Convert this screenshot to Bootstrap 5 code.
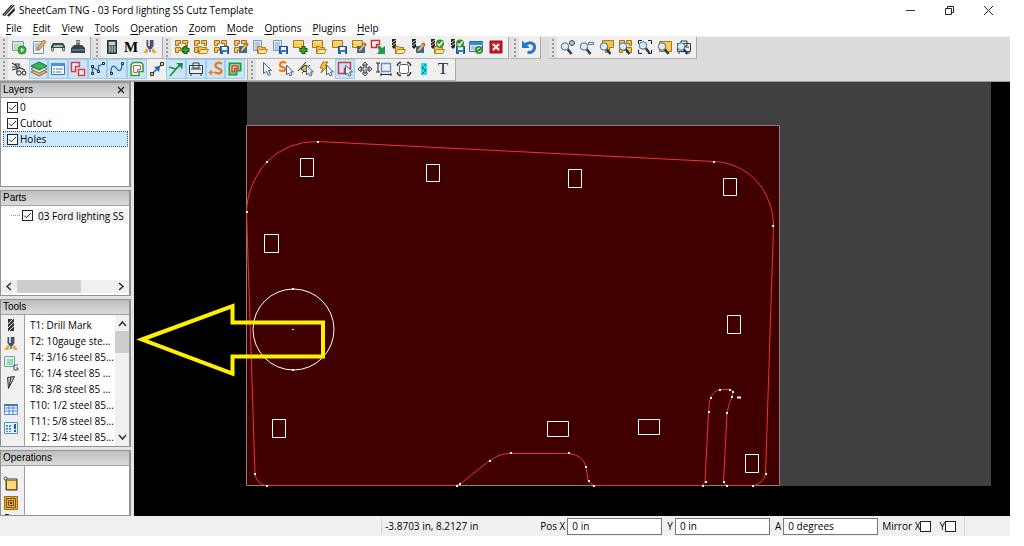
<!DOCTYPE html>
<html lang="en">
<head>
<meta charset="utf-8">
<meta name="viewport" content="width=device-width, initial-scale=1">
<title>SheetCam TNG - 03 Ford lighting SS Cutz Template</title>
<link rel="stylesheet" href="https://cdn.jsdelivr.net/npm/bootstrap@5.3.0/dist/css/bootstrap.min.css">
<style>
body{font-family:"Open Sans","Noto Sans",sans-serif;font-size:10px;line-height:16px;color:#000;background:#fff}
.app-window{height:100vh;padding:0 14px 10px 0}
button{border:0;padding:0;background:none;color:inherit}
.title-bar{height:20px;padding-left:2px}
.win-btn{width:39px;height:18px}
.win-btns{padding-right:2px}
.menu-line{height:16px;padding-left:6px}
.menu-line{gap:11px}
.menu-line a{color:#000;text-decoration:none}
.menu-line u{text-underline-offset:2px}
.tool-area{background:#dcdcdc;border-top:1px solid #f0f0f0;height:46px;border-bottom:1px solid #999}
.tool-group{height:22px;background:#f0f0f0;border-right:1px solid #aaa;border-bottom:1px solid #b4b4b4;padding-right:2px}
.grip{width:8px;margin-right:1px;background:radial-gradient(circle,#999 1px,transparent 1px) 0 1px/8px 4px,#e2e2e2}
.tool-btn{flex:1 1 0;min-width:0;height:20px}
.tool-btn.active{background:#cce4f7;outline:1px solid #99cdf5;outline-offset:-1px}
.tool-btn svg,.side-btn svg{width:16px;height:16px;display:block;margin:auto;overflow:visible}
.side-bar{width:134px;background:#e4e4e4;padding-right:3px;gap:3px}
.dock{border:1px solid #8f9296;border-right-width:2px;background:#fff;overflow:hidden}
.dock-h{height:15px;line-height:14px;padding:0 4px 0 2px;background:linear-gradient(#bfbfbf,#dadada);border-bottom:1px solid #a0a0a0;font-family:"Liberation Sans",Arial,sans-serif;font-size:10px;flex:none;margin:0;font-weight:400}
.dock-layers{height:105px}.dock-parts{height:106px;padding-bottom:2px}.dock-tools{height:148px}
.tick{appearance:none;width:11px;height:11px;border:1px solid #222;background:#fff;margin:0;flex:none}
.tick:checked{background:#fff url("data:image/svg+xml,%3Csvg xmlns='http://www.w3.org/2000/svg' viewBox='0 0 9 9'%3E%3Cpath d='M1 4.5l2.3 2.3L8 2' fill='none' stroke='%23222'/%3E%3C/svg%3E")}
.layer-list{padding:1px 1px 0 2px}
.layer-row{height:16px;padding-left:3px;gap:2px;border:1px solid transparent;line-height:14px}
.layer-row.chosen{background:#cce8ff;border:1px dotted #357}
.part-row{padding:1px 1px 0 10px;height:18px}
.part-name{background:#f2f2f2;margin-left:4px;padding-left:1px;line-height:14px}
.bar-h{height:13px;background:#f0f0f0}
.bar-h svg{display:block}
.thumb{background:#cdcdcd}
.icon-col{width:24px;background:#f0f0f0;border-right:1px solid #a0a0a0;padding-left:1px;flex:none}
.side-btn{width:18px;height:19px;display:block}
.tool-list{padding-top:2px}
.tool-list li{height:16px;padding-left:5px;white-space:nowrap}
.bar-v{width:14px;background:#f0f0f0}
.status-bar{height:20px;background:#f0f0f0}
.status-box{width:95px;height:17px;border:1px solid #777;background:#fff;padding:0 4px;font-size:10px;color:#000;border-radius:0}
.box-label{margin-right:2px;margin-left:5px}
.status-cell{border-left:1px solid #d4d4d4}
.drawing{background:#000}
.cut{fill:none;stroke:#f03232}
.hole{fill:none;stroke:#fff}
</style>
</head>
<body>
<svg width="0" height="0" class="position-absolute" aria-hidden="true">
<defs>
<symbol id="parts" viewBox="0 0 16 16"><g fill="#f6c955" stroke="#a86d12"><path d="M1.500 1.500h5v3h-2v2h-3zM8.500 1.500h5v5h-2v-2h-3zM1.500 8.500h5v3h-2v2h-3z"/><path d="M8.500 8.500h5v5h-5z"/></g></symbol>
<symbol id="part" viewBox="0 0 16 16"><path d="M1.500 1.500h10v9h-4v-2h-6z" fill="#f8ce5c" stroke="#a87718"/><path d="M3 3h7" stroke="#ffe9a0"/></symbol>
<symbol id="sheet" viewBox="0 0 16 16"><path d="M1.500 1.500h8v10h-8z" fill="#dcebfa" stroke="#8298b2"/><path d="M3 4h5M3 6h5M3 8h5M3 10h5" stroke="#6f93bf" stroke-width=".8"/></symbol>
<symbol id="drill" viewBox="0 0 16 16"><path d="M2 0h4v8l-2 2-2-2z" fill="#222"/><path d="M2 4l4-3M2 7l4-3" stroke="#ccc"/></symbol>
<symbol id="b-plus" viewBox="0 0 16 16"><path d="M11.500 7v8M7.500 11h8" stroke="#165d10" stroke-width="4"/><path d="M11.500 8v6M8.500 11h6" stroke="#36a62a" stroke-width="2"/></symbol>
<symbol id="b-folder" viewBox="0 0 16 16"><path d="M5.500 14.500v-7h3l1 1h4v2" fill="#f4c25a" stroke="#aa7823"/><path d="M5.500 14.500l2-4h8l-2 4z" fill="#ffe79b" stroke="#b1812a"/></symbol>
<symbol id="b-disk" viewBox="0 0 16 16"><path d="M7.500 7.500h8v7h-8z" fill="#2779d3" stroke="#1a4a91"/><path d="M9 8h5v3H9zM10 13h4v2h-4z" fill="#fff"/></symbol>
<symbol id="b-pencil" viewBox="0 0 16 16"><path d="M6 7h8v7H6z" fill="#2c6bb6"/><path d="M7 13l1-3 5-6 2 2-5 6z" fill="#f7b858" stroke="#553" stroke-width=".8"/><path d="M13 4l2 2" stroke="#d35d2a" stroke-width="2"/></symbol>
<symbol id="b-check" viewBox="0 0 16 16"><circle cx="11" cy="4.500" r="4" fill="#31932b"/><path d="M8.500 4.500l2 2 3-4" fill="none" stroke="#fff" stroke-width="1.500"/></symbol>
<symbol id="b-cursor" viewBox="0 0 16 16"><path d="M8.500 4v10l2-2 1.500 3 2-1-1.500-3h3z" fill="#e6f1fc" stroke="#4b6380"/></symbol>
<symbol id="b-lens" viewBox="0 0 16 16"><path d="M7.500 10l4 5" stroke="#333b49" stroke-width="2.500"/><circle cx="5" cy="7.500" r="3.700" fill="#d8eefb" stroke="#52677c"/></symbol>
<symbol id="run" viewBox="0 0 16 16"><path d="M1.500 2.500h11v9h-11z" fill="#d3e2ef" stroke="#829bb4"/><path d="M3 5h8v5H3z" fill="#b9dfb3"/><circle cx="11" cy="11" r="4" fill="#35b344" stroke="#168526"/><path d="M10 9v4l3-2z" fill="#fff"/></symbol>
<symbol id="edit" viewBox="0 0 16 16"><path d="M2.500 2.500h10v12h-10z" fill="#eef5fc" stroke="#7894b5"/><path d="M4 5h7M4 7h7M4 9h6M4 11h5" stroke="#6c98ca"/><path d="M6 11l1-3 6-7 2 2-6 7z" fill="#f2ae52" stroke="#a7652c" stroke-width=".8"/></symbol>
<symbol id="table-m" viewBox="0 0 16 16"><path d="M3 4h10l2 3v2H1V7z" fill="#3f474c"/><path d="M4 6h8l1 2H3z" fill="#8ccdbb"/><path d="M1.500 9v3h2V9M12.500 9v3h2V9" fill="#bbb" stroke="#777"/></symbol>
<symbol id="printer" viewBox="0 0 16 16"><path d="M6 1h4v6H6z" fill="#68737e"/><path d="M6 3h4" stroke="#ddd"/><path d="M1 9l3-3h8l3 3v5H1z" fill="#354252"/><path d="M2 11h12" stroke="#929ca6"/></symbol>
<symbol id="calc" viewBox="0 0 16 16"><path d="M3.500 1.500h9v13h-9z" fill="#4e5d61" stroke="#222e32"/><path d="M5 3h6v3H5z" fill="#b4dfcf"/><path d="M5 8h1.500M7.500 8H9M10 8h1.500M5 10h1.500M7.500 10H9M10 10h1.500M5 12h1.500M7.500 12H9M10 12h1.500" stroke="#eee" stroke-width="1.200"/></symbol>
<symbol id="torch" viewBox="0 0 16 16"><path d="M4.500 1h7v6l-2 3h-3l-2-3z" fill="#465262"/><path d="M7 1v6" stroke="#c2d0dc" stroke-width="2"/><path d="M8 10v3" stroke="#38a3e6" stroke-width="2"/><path d="M1 14l4-5 1.500 2.500L5 14zM15 14l-4-5-1.500 2.500L11 14z" fill="#f5a61f"/></symbol>
<symbol id="nest" viewBox="0 0 16 16"><path d="M1.500 1.500h8v4h-3v3h-5z" fill="#fff" stroke="#df2733" stroke-width="1.500"/><path d="M7 7h3l2 2 3-2v8H7l2-3z" fill="#25984b"/></symbol>
<symbol id="refresh" viewBox="0 0 16 16"><path d="M1.500 2.500h13v10h-13z" fill="#e3eef9" stroke="#2c67a5"/><path d="M1 3h14v3H1z" fill="#3b88d7"/><path d="M3 8h5M3 10h4" stroke="#7894b5"/><circle cx="11" cy="11" r="4" fill="#2b8f35"/><path d="M9 11q0-2 3-2M13 11q0 2-3 2" stroke="#d2ffd0" fill="none"/></symbol>
<symbol id="stop" viewBox="0 0 16 16"><path d="M2 2h12v12H2z" fill="#cc1b28" stroke="#8d1119"/><path d="M5 5l6 6M11 5l-6 6" stroke="#fff" stroke-width="2"/></symbol>
<symbol id="undo" viewBox="0 0 16 16"><path d="M4 6C9 2 14 4 13.500 9c-.500 4-4 5-7 4" fill="none" stroke="#2474d0" stroke-width="3"/><path d="M1 1.500V9h8z" fill="#2379d7"/></symbol>
<symbol id="rapid" viewBox="0 0 16 16"><path d="M1 2l5 3v7M1 9l8-2 5 2M4 3h4v4M1 6h5" fill="none" stroke="#29323c" stroke-width="1.200"/><circle cx="8" cy="12" r="2.200" fill="#eee" stroke="#222"/><circle cx="13" cy="12" r="2" fill="#eee" stroke="#222"/></symbol>
<symbol id="layers" viewBox="0 0 16 16"><path d="M0 11l8-4 8 4-8 4z" fill="#f3b355" stroke="#9d641b"/><path d="M0 8l8-4 8 4-8 4z" fill="#e9eff4" stroke="#647484"/><path d="M0 5l8-4 8 4-8 4z" fill="#39b65a" stroke="#136c33"/></symbol>
<symbol id="props" viewBox="0 0 16 16"><path d="M1.500 2.500h13v11h-13z" fill="#f5fafe" stroke="#4276b0"/><path d="M1 3.500h14" stroke="#4d91d8" stroke-width="3"/><path d="M3 8h2M6 8h7M3 11h2M6 11h5" stroke="#4878a7"/></symbol>
<symbol id="redparts" viewBox="0 0 16 16"><path d="M1.500 1.500h8v4h-4v5h-4zM8.500 8.500h6v6h-6z" fill="#eef3fa" stroke="#d83b48" stroke-width="1.500"/></symbol>
<symbol id="nodes" viewBox="0 0 16 16"><path d="M2.500 12V6l6 4V5l5-2" fill="none" stroke="#246bb1" stroke-width="1.300"/><path d="M1.500 11.500h2v2h-2zM1.500 4.500h2v2h-2zM7.500 9.500h2v2h-2zM12.500 1.500h2v2h-2z" fill="#fff" stroke="#222"/></symbol>
<symbol id="curve" viewBox="0 0 16 16"><path d="M2 12C2 2 6 5 8 8s5 2 5-5" fill="none" stroke="#1966ba" stroke-width="1.300"/><path d="M1.500 11.500h2v2h-2zM12.500 1.500h2v2h-2z" fill="#fff" stroke="#222"/></symbol>
<symbol id="greenpart" viewBox="0 0 16 16"><path d="M4 1.500h8l2 2v7h-4v4H2V4z" fill="#fff" stroke="#259d3e" stroke-width="1.500"/><path d="M4.500 4.500h7v4h-3v3h-4z" fill="none" stroke="#d64f48"/></symbol>
<symbol id="startpt" viewBox="0 0 16 16"><path d="M3 13l9-9" stroke="#1c69b5" stroke-width="1.500"/><path d="M1.500 11.500h3v3h-3zM11.500 1.500h3v3h-3z" fill="#f6c34d" stroke="#333"/><path d="M5 6l6-1-1 6z" fill="#1c69b5"/></symbol>
<symbol id="arrow-d" viewBox="0 0 16 16"><path d="M1 6l7 2 4-4M2 15l6-7" fill="none" stroke="#22984b" stroke-width="1.800"/><path d="M8 2h7l-1 7-2-4z" fill="#178b42"/></symbol>
<symbol id="machine" viewBox="0 0 16 16"><path d="M1.500 4.500h13v8h-13zM3 8h10M5 2h6v5H5zM3 13v2M13 13v2" fill="#e9eff4" stroke="#303c48"/></symbol>
<symbol id="plus-s" viewBox="0 0 16 16"><path d="M3 9v5M.5 11.500h5" stroke="#ef7918" stroke-width="1.500"/><path d="M14 3C11 .5 7 2 7.500 5s6 2 6 5-5 3-7 1" stroke="#ef7918" fill="none" stroke-width="2.300"/></symbol>
<symbol id="outline" viewBox="0 0 16 16"><path d="M2.500 2.500h11v7h-4v4h-7z" fill="#fff" stroke="#0da832" stroke-width="2"/><path d="M5 5h6v2.500H7.500V11H5z" fill="#fff" stroke="#e22b24" stroke-width="1.500"/></symbol>
<symbol id="cursor" viewBox="0 0 16 16"><path d="M4.500 1.500v11l3-2 2 4 2-1-2-4h3z" fill="#e3f0fc" stroke="#4b6685"/></symbol>
<symbol id="move" viewBox="0 0 16 16"><path d="M8 3v10M3 8h10" stroke="#333" stroke-width="3"/><path d="M8 3v10M3 8h10" stroke="#fff"/><path d="M5.500 4L8 1l2.500 3zM5.500 12L8 15l2.500-3zM4 5.500L1 8l3 2.500zM12 5.500L15 8l-3 2.500z" fill="#fff" stroke="#333"/></symbol>
<symbol id="measure" viewBox="0 0 16 16"><path d="M5.500 2.500h9v8h-9z" fill="#e6effa" stroke="#7093bd" stroke-width="1.500"/><path d="M2 2v9M0 2h4M0 11h4M5 13.500h10M5 12v3M15 12v3" stroke="#223"/></symbol>
<symbol id="corners" viewBox="0 0 16 16"><path d="M1.500 5V3.500l2-2H5M11 1.500h1.500l2 2V5M1.500 11v1.500l2 2H5M14.500 11v1.500l-2 2H11" fill="none" stroke="#333" stroke-width="1.500"/><rect x="3.500" y="3.500" width="9" height="9" rx="2" fill="#fff" stroke="#555"/></symbol>
<symbol id="zigzag" viewBox="0 0 16 16"><path d="M5 2h6v12H5z" fill="#16e6ec"/><path d="M10 3L6 7l4 2-4 4" stroke="#184d6b" fill="none"/></symbol>
<symbol id="gsheet" viewBox="0 0 16 16"><path d="M1.500 1.500h10v10h-10z" fill="#d9eff4" stroke="#6e9dbb"/><path d="M4 4h6v6H4z" fill="#91e199"/><path d="M15 10h-4v5h4v-2h-2" fill="none" stroke="#44525e"/></symbol>
<symbol id="engrave" viewBox="0 0 16 16"><path d="M4.500 3.500l7-1-6 12z" fill="#ccc" stroke="#333"/><path d="M8 3L6 13" stroke="#333"/></symbol>
<symbol id="grid-t" viewBox="0 0 16 16"><path d="M1.500 3.500h13v10h-13zM1 7h14M1 10h14M6 3v10M10 3v10" fill="#e9f4ff" stroke="#568fca"/><path d="M1 4h14" stroke="#3f77b5" stroke-width="2"/></symbol>
<symbol id="info-t" viewBox="0 0 16 16"><path d="M1.500 2.500h13v11h-13z" fill="#eaf5ff" stroke="#568fca"/><path d="M4 5v7M7 5v7" stroke="#5c8eb9" stroke-width="2" stroke-dasharray="2 1"/><path d="M12 4v5M12 10v2" stroke="#1c5da7" stroke-width="2"/></symbol>
</defs>
</svg>
<div class="app-window d-flex flex-column overflow-hidden">
<header class="title-bar d-flex align-items-center flex-shrink-0">
<svg width="13" height="13" viewBox="0 0 13 13" aria-hidden="true"><path d="M0 11L9 1l4 0L3 12z" fill="#222"/><path d="M2 11L11 1M5 12l8-9" stroke="#aaa"/><path d="M6 12l7-7" stroke="#222" stroke-width="2"/></svg>
<span class="ms-1 me-auto">SheetCam TNG - 03 Ford lighting SS Cutz Template</span>
<div class="win-btns d-flex">
<button class="win-btn" aria-label="Minimize"><svg width="11" height="11" class="d-block mx-auto"><path d="M1 5.500h9" stroke="#333"/></svg></button>
<button class="win-btn" aria-label="Restore"><svg width="11" height="11" class="d-block mx-auto"><path d="M1.500 3.500h6v6h-6zM3.500 3V1.500h6v6H8" fill="none" stroke="#222"/></svg></button>
<button class="win-btn" aria-label="Close"><svg width="11" height="11" class="d-block mx-auto"><path d="M1 1l9 9M10 1l-9 9" stroke="#222"/></svg></button>
</div>
</header>
<nav class="menu-line d-flex flex-shrink-0">
<a href="#"><u>F</u>ile</a><a href="#"><u>E</u>dit</a><a href="#"><u>V</u>iew</a><a href="#"><u>T</u>ools</a><a href="#"><u>O</u>peration</a><a href="#"><u>Z</u>oom</a><a href="#"><u>M</u>ode</a><a href="#"><u>O</u>ptions</a><a href="#"><u>P</u>lugins</a><a href="#"><u>H</u>elp</a>
</nav>
<div class="tool-area flex-shrink-0">
<div class="d-flex">
<div class="tool-group d-flex" style="width:91px"><span class="grip"></span>
<button class="tool-btn" aria-label="Run post"><svg><use href="#run"/></svg></button>
<button class="tool-btn" aria-label="Edit notes"><svg><use href="#edit"/></svg></button>
<button class="tool-btn" aria-label="Machine"><svg><use href="#table-m"/></svg></button>
<button class="tool-btn" aria-label="Print"><svg><use href="#printer"/></svg></button></div>
<div class="tool-group d-flex" style="width:70px;margin-left:2px"><span class="grip"></span>
<button class="tool-btn" aria-label="Calculator"><svg><use href="#calc"/></svg></button>
<button class="tool-btn" aria-label="Material"><svg viewBox="0 0 16 16"><text x="8" y="13" text-anchor="middle" font-family="Liberation Serif" font-weight="bold" font-size="15">M</text></svg></button>
<button class="tool-btn" aria-label="Torch"><svg><use href="#torch"/></svg></button></div>
<div class="tool-group d-flex" style="width:346px"><span class="grip"></span>
<button class="tool-btn" aria-label="New job"><svg><use href="#parts"/><use href="#b-plus"/></svg></button>
<button class="tool-btn" aria-label="Open job"><svg><use href="#parts"/><use href="#b-folder"/></svg></button>
<button class="tool-btn" aria-label="Save job"><svg><use href="#parts"/><use href="#b-disk"/></svg></button>
<button class="tool-btn" aria-label="Save job as"><svg><use href="#parts"/><use href="#b-pencil"/></svg></button>
<button class="tool-btn" aria-label="Open template"><svg><use href="#sheet"/><use href="#b-folder"/></svg></button>
<button class="tool-btn" aria-label="Save template"><svg><use href="#sheet"/><use href="#b-disk"/></svg></button>
<button class="tool-btn" aria-label="New part"><svg><use href="#part"/><use href="#b-plus"/></svg></button>
<button class="tool-btn" aria-label="Open part"><svg><use href="#part"/><use href="#b-folder"/></svg></button>
<button class="tool-btn" aria-label="Save part"><svg><use href="#part"/><use href="#b-disk"/></svg></button>
<button class="tool-btn" aria-label="Save part as"><svg><use href="#part"/><use href="#b-pencil"/></svg></button>
<button class="tool-btn" aria-label="Import drawing"><svg><use href="#nest"/></svg></button>
<button class="tool-btn" aria-label="Open tools"><svg><use href="#drill"/><use href="#b-folder"/></svg></button>
<button class="tool-btn" aria-label="Save tools as"><svg><use href="#drill"/><use href="#b-pencil"/></svg></button>
<button class="tool-btn" aria-label="Open default tools"><svg><use href="#drill"/><use href="#b-folder"/><use href="#b-check"/></svg></button>
<button class="tool-btn" aria-label="Save default tools"><svg><use href="#drill"/><use href="#b-disk"/><use href="#b-check"/></svg></button>
<button class="tool-btn" aria-label="Reload"><svg><use href="#refresh"/></svg></button>
<button class="tool-btn" aria-label="Exit"><svg><use href="#stop"/></svg></button></div>
<div class="tool-group d-flex" style="width:30px;margin-left:2px"><span class="grip"></span>
<button class="tool-btn" aria-label="Undo"><svg><use href="#undo"/></svg></button></div>
<div class="tool-group d-flex" style="width:148px;margin-left:8px"><span class="grip"></span>
<button class="tool-btn" aria-label="Zoom in"><svg viewBox="0 0 16 16"><use href="#b-lens"/><path d="M12 1v6M9 4h6" stroke="#4e5d75" stroke-width="3"/><path d="M12 2v4M10 4h4" stroke="#eef"/></svg></button>
<button class="tool-btn" aria-label="Zoom out"><svg viewBox="0 0 16 16"><use href="#b-lens"/><path d="M9.500 3.500h5v2h-5z" fill="#eef" stroke="#5a7297"/></svg></button>
<button class="tool-btn" aria-label="Zoom part"><svg viewBox="0 0 16 16"><path d="M3.500 1.500h11v7h-4v5h-4v-6h-3z" fill="#f4c44c" stroke="#a87718"/><use href="#b-lens"/></svg></button>
<button class="tool-btn" aria-label="Zoom job"><svg><use href="#parts"/><use href="#b-lens"/></svg></button>
<button class="tool-btn" aria-label="Zoom extents"><svg viewBox="0 0 16 16"><path d="M1.500 5V1.500H5M11 1.500h3.500V5M1.500 11v3.500H5M14.500 11v3.500H11" fill="none" stroke="#222"/><use href="#b-lens" width="16" height="16" x="1" y="-1"/></svg></button>
<button class="tool-btn" aria-label="Zoom material"><svg viewBox="0 0 16 16"><path d="M2.500 2.500h12v10h-12z" fill="#f8cb51" stroke="#a87718"/><use href="#b-lens"/></svg></button>
<button class="tool-btn" aria-label="Zoom machine"><svg><use href="#machine"/><use href="#b-lens"/></svg></button></div>
</div>
<div class="d-flex">
<div class="tool-group d-flex" style="width:248px"><span class="grip"></span>
<button class="tool-btn" aria-label="Show rapids"><svg><use href="#rapid"/></svg></button>
<button class="tool-btn active" aria-label="Show layers"><svg><use href="#layers"/></svg></button>
<button class="tool-btn active" aria-label="Show properties"><svg><use href="#props"/></svg></button>
<button class="tool-btn active" aria-label="Show parts"><svg><use href="#redparts"/></svg></button>
<button class="tool-btn active" aria-label="Show nodes"><svg><use href="#nodes"/></svg></button>
<button class="tool-btn active" aria-label="Show segments"><svg><use href="#curve"/></svg></button>
<button class="tool-btn active" aria-label="Show cut width"><svg><use href="#greenpart"/></svg></button>
<button class="tool-btn" aria-label="Show start points"><svg><use href="#startpt"/></svg></button>
<button class="tool-btn active" aria-label="Show direction"><svg><use href="#arrow-d"/></svg></button>
<button class="tool-btn active" aria-label="Show machine"><svg><use href="#machine"/></svg></button>
<button class="tool-btn active" aria-label="Snap"><svg><use href="#plus-s"/></svg></button>
<button class="tool-btn active" aria-label="Show outlines"><svg><use href="#outline"/></svg></button></div>
<div class="tool-group d-flex" style="width:208px"><span class="grip"></span>
<button class="tool-btn" aria-label="Select"><svg><use href="#cursor"/></svg></button>
<button class="tool-btn" aria-label="Edit start points"><svg viewBox="0 0 16 16"><path d="M8 2C5 0 2 1 2 4s5 1 5 4-4 2-6 1" fill="none" stroke="#ef7918" stroke-width="2.200"/><use href="#b-cursor"/></svg></button>
<button class="tool-btn" aria-label="Edit tabs"><svg viewBox="0 0 16 16"><path d="M0 10L8 1M4 12l8-8" stroke="#222"/><path d="M3 8l4-4 4 3-4 4z" fill="#e5b82d" stroke="#333"/><use href="#b-cursor"/></svg></button>
<button class="tool-btn" aria-label="Edit actions"><svg viewBox="0 0 16 16"><path d="M5 1h5L7 5h3l-7 7 2-5H2z" fill="#f8c437" stroke="#9a741c"/><use href="#b-cursor"/></svg></button>
<button class="tool-btn active" aria-label="Edit contours"><svg viewBox="0 0 16 16"><path d="M1.500 1.500h12v6h-6v5h-6z" fill="none" stroke="#ce3940" stroke-width="1.500"/><use href="#b-cursor"/></svg></button>
<button class="tool-btn" aria-label="Move"><svg><use href="#move"/></svg></button>
<button class="tool-btn" aria-label="Measure"><svg><use href="#measure"/></svg></button>
<button class="tool-btn" aria-label="Nesting"><svg><use href="#corners"/></svg></button>
<button class="tool-btn" aria-label="Path order"><svg><use href="#zigzag"/></svg></button>
<button class="tool-btn" aria-label="Text"><svg viewBox="0 0 16 16"><text x="8" y="13" text-anchor="middle" font-family="Liberation Serif" font-size="17" fill="#26313c">T</text></svg></button></div>
</div>
</div>
<main class="d-flex flex-grow-1 overflow-hidden">
<aside class="side-bar d-flex flex-column flex-shrink-0">
<section class="dock dock-layers flex-shrink-0">
<h2 class="dock-h d-flex justify-content-between align-items-center">Layers<button aria-label="Close layers"><svg width="8" height="8" class="d-block"><path d="M1 1l6 6M7 1L1 7" stroke="#222" stroke-width="1.300"/></svg></button></h2>
<div class="layer-list">
<label class="layer-row d-flex align-items-center"><input class="tick" type="checkbox" checked>0</label>
<label class="layer-row d-flex align-items-center"><input class="tick" type="checkbox" checked>Cutout</label>
<label class="layer-row chosen d-flex align-items-center"><input class="tick" type="checkbox" checked>Holes</label>
</div>
</section>
<section class="dock dock-parts d-flex flex-column flex-shrink-0">
<h2 class="dock-h">Parts</h2>
<label class="part-row d-flex align-items-center text-nowrap flex-shrink-0"><svg width="11" height="3" class="flex-shrink-0"><path d="M0 1.500h10" stroke="#999" stroke-dasharray="1 1"/></svg><input class="tick" type="checkbox" checked><span class="part-name flex-grow-1">03 Ford lighting SS</span></label>
<div class="bar-h mt-auto d-flex align-items-stretch flex-shrink-0">
<button aria-label="Scroll left"><svg width="16" height="9"><path d="M10 1L6 4.500l4 3.500" fill="none" stroke="#333" stroke-width="1.500"/></svg></button><span class="thumb w-50"></span>
<button class="ms-auto" aria-label="Scroll right"><svg width="16" height="9"><path d="M6 1l4 3.500L6 8" fill="none" stroke="#333" stroke-width="1.500"/></svg></button></div>
</section>
<section class="dock dock-tools d-flex flex-column flex-shrink-0">
<h2 class="dock-h">Tools</h2>
<div class="d-flex flex-grow-1 overflow-hidden">
<div class="icon-col">
<button class="side-btn" aria-label="New drill"><svg viewBox="0 0 16 16"><path d="M5 2h6v12H5z" fill="#333"/><path d="M5 7l5-5M5 11l6-6M6 14l5-5" stroke="#ddd"/></svg></button>
<button class="side-btn" aria-label="New torch"><svg><use href="#torch"/></svg></button>
<button class="side-btn" aria-label="New code"><svg><use href="#gsheet"/></svg></button>
<button class="side-btn" aria-label="New engraver"><svg><use href="#engrave"/></svg></button>
<button class="side-btn mt-2" aria-label="Tool table"><svg><use href="#grid-t"/></svg></button>
<button class="side-btn" aria-label="Tool details"><svg><use href="#info-t"/></svg></button></div>
<ul class="tool-list list-unstyled mb-0 flex-grow-1 overflow-hidden">
<li>T1: Drill Mark</li><li>T2: 10gauge ste...</li><li>T4: 3/16 steel 85...</li><li>T6: 1/4 steel 85 ...</li><li>T8: 3/8 steel 85 ...</li><li>T10: 1/2 steel 85...</li><li>T11: 5/8 steel 85...</li><li>T12: 3/4 steel 85...</li></ul>
<div class="bar-v d-flex flex-column flex-shrink-0">
<button aria-label="Scroll up"><svg width="9" height="16" class="d-block mx-auto"><path d="M1 11l3.500-4L8 11" fill="none" stroke="#333" stroke-width="1.500"/></svg></button><span class="thumb" style="height:22px"></span>
<button class="mt-auto" aria-label="Scroll down"><svg width="9" height="16" class="d-block mx-auto"><path d="M1 5l3.500 4L8 5" fill="none" stroke="#333" stroke-width="1.500"/></svg></button></div>
</div>
</section>
<section class="dock d-flex flex-column flex-grow-1">
<h2 class="dock-h">Operations</h2>
<div class="d-flex flex-grow-1 overflow-hidden"><div class="icon-col pt-2">
<button class="side-btn" aria-label="Outside offset"><svg viewBox="0 0 16 16"><path d="M3.500 4.500h10v9h-10z" fill="#ffda74" stroke="#b1812a"/><path d="M3 3h11v11H3z" fill="none" stroke="#333"/><circle cx="2.500" cy="2.500" r="1.500" fill="#fff" stroke="#333"/></svg></button>
<button class="side-btn" aria-label="Pocket"><svg viewBox="0 0 16 16"><path d="M1.500 1.500h13v13h-13z" fill="#ecb02e" stroke="#9b6b18"/><path d="M3.500 3.500h9v9h-9zM5.500 5.500h5v5h-5z" fill="none" stroke="#76501b"/><path d="M7 7h2v2H7z" fill="#333"/></svg></button>
<button class="side-btn" aria-label="Drill"><svg><use href="#drill"/></svg></button></div></div>
</section>
</aside>
<div class="drawing flex-grow-1 overflow-hidden">
<svg class="d-block w-100 h-100" viewBox="134 82 876 434" role="img" aria-label="Part drawing">
<path d="M247 82h744v404H247z" fill="#404040"/>
<path d="M246.500 125.500h533v360h-533z" fill="#400000" stroke="#8a8080"/>
<path class="cut" d="M318 141.500L714 161.500C748 163 773 190 773.500 226L765.500 474Q763 484 753 485.500H727Q724 484 723.500 482L727 413Q729 402 732 397L733 391.500Q731 389.500 729 389.500H720Q712 391 709.500 401L708.500 412L705 482L702 485.500H595Q589 484 588 480L586 467Q583 455 569 453.500H511Q500 453 489 461L460 484L456 485.500H267Q257 485 255 474L246.500 212C247 195 253 178 267 161.500Q288 141 318 141.500"/>
<g class="hole"><circle cx="293.500" cy="329.500" r="40.500"/>
<path d="M300.500 158.500h13v18h-13zM426.500 164.500h13v17h-13zM568.500 169.500h13v18h-13zM723.500 178.500h13v17h-13zM264.500 234.500h14v18h-14zM727.500 315.500h13v18h-13zM272.500 419.500h13v18h-13zM547.500 421.500h21v15h-21zM638.500 419.500h21v15h-21zM745.500 454.500h13v18h-13z"/></g>
<path d="M317 141h2v2h-2zM266 161h2v2h-2zM246 211h2v2h-2zM254 473h2v2h-2zM266 485h2v2h-2zM292 329h2v1h-2zM292 288h2v2h-2zM292 369h2v2h-2zM713 161h2v2h-2zM772 225h2v2h-2zM765 473h2v2h-2zM752 485h2v2h-2zM726 485h2v2h-2zM723 481h2v2h-2zM702 485h2v2h-2zM705 481h2v2h-2zM708 411h2v2h-2zM710 397h2v2h-2zM719 389h2v2h-2zM729 389h2v2h-2zM732 391h2v2h-2zM731 396h2v2h-2zM726 412h2v2h-2zM737 396.500h4v2h-4zM593 485h2v2h-2zM588 480h2v2h-2zM585 466h2v2h-2zM568 452h2v2h-2zM510 452h2v2h-2zM489 460h2v2h-2zM459 483h2v2h-2zM456 485h2v2h-2z" fill="#fff"/>
<path d="M142 339.500L232.500 306v16.500h90.500V356.500H232.500V373.500z" fill="none" stroke="#fff000" stroke-width="4"/>
</svg>
</div>
</main>
<footer class="status-bar d-flex align-items-center flex-shrink-0 justify-content-end">
<span class="status-cell" style="width:154px;padding-left:3px">-3.8703 in, 8.2127 in</span>
<label class="box-label" for="posx">Pos X</label><input id="posx" class="status-box" value="0 in">
<label class="box-label" for="posy">Y</label><input id="posy" class="status-box" value="0 in">
<label class="box-label" for="angle">A</label><input id="angle" class="status-box" value="0 degrees">
<label class="ms-1" for="mirx">Mirror X</label><input id="mirx" class="tick me-2" type="checkbox"><label for="miry">Y</label><input id="miry" class="tick me-2" type="checkbox">
<span class="status-cell align-self-stretch" style="width:46px"></span>
</footer>
</div>
<script src="https://cdn.jsdelivr.net/npm/bootstrap@5.3.0/dist/js/bootstrap.bundle.min.js"></script>
</body>
</html>
